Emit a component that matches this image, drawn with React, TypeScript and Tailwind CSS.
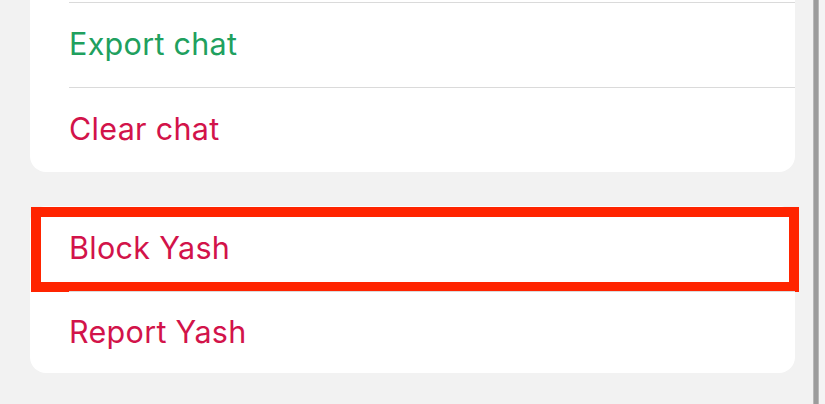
const font = { fontFamily: 'Inter, "Noto Sans", sans-serif' };

function Row({
  label,
  tone,
  divider = false,
  height,
  children,
}: {
  label: string;
  tone: 'green' | 'red';
  divider?: boolean;
  height: string;
  children?: React.ReactNode;
}) {
  return (
    <div className={`relative flex items-center pl-[39px] ${height}`}>
      {divider && <div className="absolute top-0 left-[39px] right-0 h-px bg-[#dadada]" />}
      <span
        className={`text-[30.5px] leading-none tracking-[0.3px] ${
          tone === 'green' ? 'text-[#20a05e]' : 'text-[#d2134a]'
        }`}
      >
        {label}
      </span>
      {children}
    </div>
  );
}

export default function App() {
  return (
    <div className="w-[825px] h-[404px] overflow-hidden bg-[#f2f2f2] flex" style={font}>
      <div className="w-[813px] pl-[30px] pr-[18px] flex flex-col">
        {/* Chat actions */}
        <div className="bg-white rounded-b-[16px] flex flex-col">
          <div className="h-[2px]" />
          <Row label="Export chat" tone="green" divider height="h-[85px]" />
          <Row label="Clear chat" tone="red" divider height="h-[85px]" />
        </div>

        {/* Block / report */}
        <div className="mt-[34px] bg-white rounded-[16px] flex flex-col">
          <Row label="Block Yash" tone="red" height="h-[85px]">
            <div className="absolute top-[1px] left-[1px] right-[-4px] bottom-[-1px] border-[10px] border-[#ff2400]" />
          </Row>
          <Row label="Report Yash" tone="red" divider height="h-[82px]" />
        </div>
      </div>

      {/* scrollbar */}
      <div className="w-[6px] h-full bg-[#9c9c9c] border-x border-[#b8b8b8]" />
      <div className="flex-1 bg-[#f4f4f4]" />
    </div>
  );
}
